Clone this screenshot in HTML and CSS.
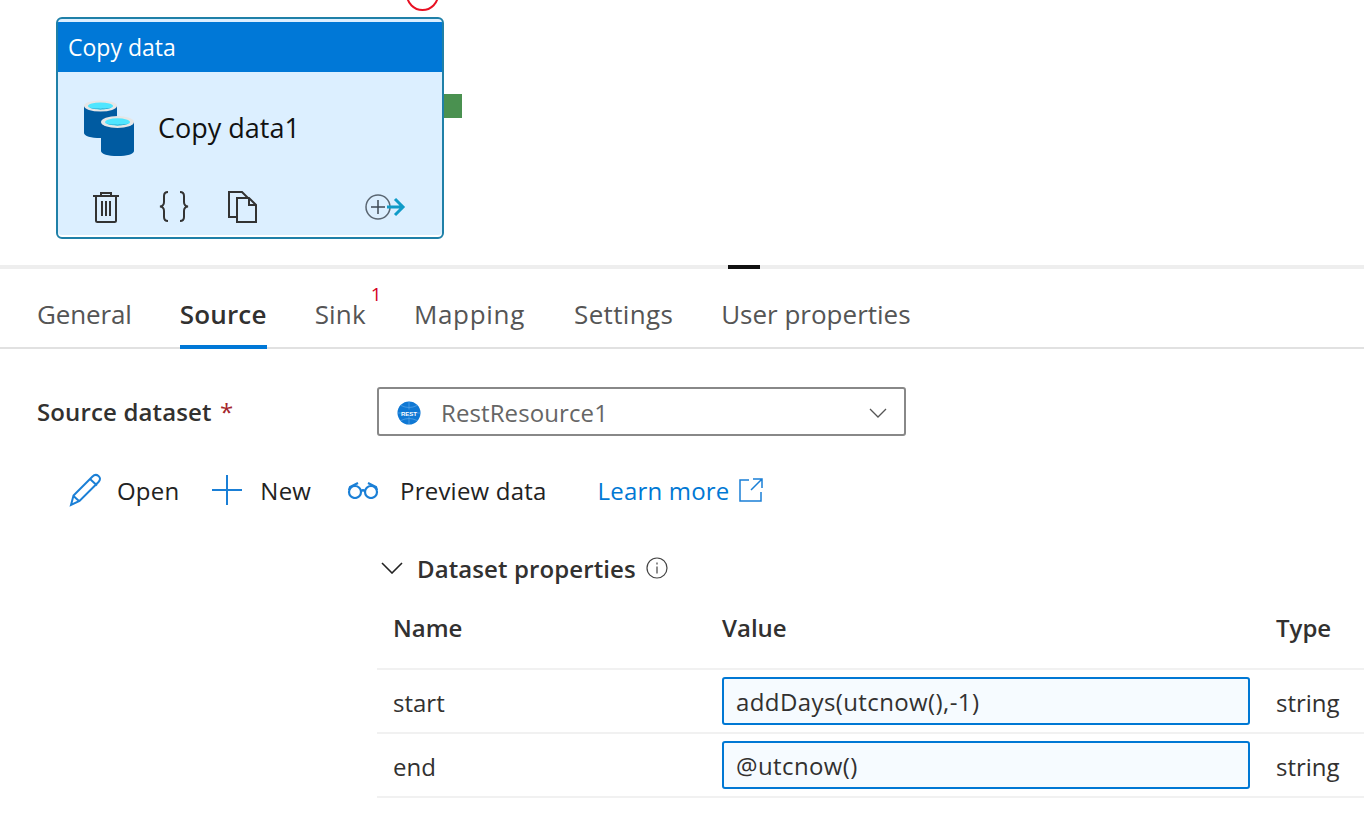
FILE: index.html
```html
<!DOCTYPE html>
<html lang="en">
<head>
<meta charset="utf-8">
<title>Copy data</title>
<link rel="stylesheet" href="styles.css">
</head>
<body>
<section class="canvas">
  <div class="error-ring"></div>
  <div class="port"></div>
  <div class="node">
    <div class="node-head">Copy data</div>
    <div class="node-body">
      <svg class="db" width="50" height="56" viewBox="0 0 50 56">
        <path d="M0 6v27c0 3 7 5 16.500 5S33 36 33 33V6z" fill="#005ba1"/>
        <ellipse cx="16.500" cy="6" rx="16.500" ry="5.500" fill="#e6e6e6"/>
        <ellipse cx="16.500" cy="6" rx="12.500" ry="3.500" fill="#50e6ff"/>
        <path d="M6 7.500c3 1.500 18 1.500 21 0-3 2.500-18 2.500-21 0z" fill="#2aa0c8"/>
        <path d="M17 22v29c0 3 7 5 16.500 5S50 54 50 51V22z" fill="#005ba1"/>
        <ellipse cx="33.500" cy="22" rx="16.500" ry="6" fill="#e6e6e6"/>
        <ellipse cx="33.500" cy="22" rx="12.500" ry="3.700" fill="#50e6ff"/>
        <path d="M23 23.500c3 1.500 18 1.500 21 0-3 2.500-18 2.500-21 0z" fill="#2aa0c8"/>
      </svg>
      <span class="node-name">Copy data1</span>
    </div>
    <div class="node-actions">
      <svg class="ico-trash" width="28" height="32" viewBox="0 0 28 32" fill="none" stroke="#333" stroke-width="2">
        <path d="M1 5h26M9 5V2h10v3M4 5v24.500q0 1.500 1.500 1.500h17q1.500 0 1.500-1.500V5M10 10v15M14 10v15M18 10v15"/>
      </svg>
      <svg class="ico-braces" width="30" height="32" viewBox="0 0 30 32" fill="none" stroke="#333" stroke-width="2">
        <path d="M9 1q-4 0-4 4v6q0 4-4 4.500 4 .5 4 4.500v6q0 4 4 4M21 1q4 0 4 4v6q0 4 4 4.500-4 .5-4 4.500v6q0 4-4 4"/>
      </svg>
      <svg class="ico-copy" width="30" height="32" viewBox="0 0 30 32" fill="none" stroke="#333" stroke-width="2">
        <path d="M9 26H1V1h13l6 6M9 7h12l7 7v17H9zM21 7v7h7"/>
      </svg>
      <svg class="ico-add" width="42" height="28" viewBox="0 0 42 28" fill="none">
        <circle cx="13" cy="14" r="12" stroke="#5a6672" stroke-width="1.500"/>
        <path d="M6 14h14M13 7v14" stroke="#3f4a55" stroke-width="1.500"/>
        <path d="M22 14h16M30 6l8 8-8 8" stroke="#0f9bc8" stroke-width="3"/>
      </svg>
    </div>
  </div>
</section>
<div class="splitter"><span class="grip"></span></div>
<nav class="tabs">
  <span class="tab t-general">General</span>
  <span class="tab active">Source</span>
  <span class="tab">Sink<sup class="badge">1</sup></span>
  <span class="tab t-mapping">Mapping</span>
  <span class="tab t-settings">Settings</span>
  <span class="tab t-user">User properties</span>
</nav>
<main class="panel">
  <div class="dataset-row">
    <label class="field-label">Source dataset <span class="req">*</span></label>
    <div class="select">
      <svg width="24" height="24" viewBox="0 0 24 24">
        <circle cx="12" cy="12" r="11.500" fill="#0f78d4"/>
        <path d="M.5 12h23M12 .5v23M4 4.500q8 4 16 0M4 19.500q8-4 16 0" stroke="#5ba8e8" stroke-width=".7" fill="none"/>
        <rect x="4.500" y="8.500" width="15" height="7" fill="#0f78d4"/>
        <text x="12" y="14.500" class="rest-text">REST</text>
      </svg>
      <span class="select-value">RestResource1</span>
      <svg class="chev" width="18" height="10" viewBox="0 0 18 10" fill="none" stroke="#555" stroke-width="1.300"><path d="M1 1l8 8 8-8"/></svg>
    </div>
  </div>
  <div class="toolbar">
    <span class="action a-open">
      <svg width="34" height="34" viewBox="0 0 34 34" fill="none" stroke="#1a7fd6" stroke-width="2">
        <path d="M2 32l2.500-9.500L23.500 3.500q3-3 6-.5t0 6L10.500 28zM4.500 23l6 5.500M21 6l7 6.500"/>
      </svg>
      <span>Open</span>
    </span>
    <span class="action a-new">
      <svg width="30" height="30" viewBox="0 0 30 30" fill="none" stroke="#1a7fd6" stroke-width="2"><path d="M0 15h30M15 0v30"/></svg>
      <span>New</span>
    </span>
    <span class="action a-prev">
      <svg width="32" height="18" viewBox="0 0 32 18" fill="none" stroke="#1a7fd6" stroke-width="2.200">
        <circle cx="8" cy="11" r="6"/><circle cx="24" cy="11" r="6"/><path d="M14 10q2-1.500 4 0M2 9l1-3 8-4M30 9l-1-3-8-4"/>
      </svg>
      <span>Preview data</span>
    </span>
    <a class="learn">Learn more
      <svg width="24" height="24" viewBox="0 0 24 24" fill="none" stroke="#1a7fd6" stroke-width="1.500"><path d="M10 2H1v21h21v-9M14 1h9v9M23 1L12 12"/></svg>
    </a>
  </div>
  <section class="props">
    <div class="props-head">
      <svg width="22" height="12" viewBox="0 0 22 12" fill="none" stroke="#222" stroke-width="1.600"><path d="M1 1l10 10L21 1"/></svg>
      <span class="props-title">Dataset properties</span>
      <svg width="22" height="22" viewBox="0 0 22 22" fill="none" stroke="#444" stroke-width="1.200"><circle cx="11" cy="11" r="10"/><path d="M11 9.500v7M11 5.500v2"/></svg>
    </div>
    <div class="grid-row grid-head"><span>Name</span><span>Value</span><span>Type</span></div>
    <div class="grid-row"><span>start</span><div class="input">addDays(utcnow(),-1)</div><span>string</span></div>
    <div class="grid-row"><span>end</span><div class="input">@utcnow()</div><span>string</span></div>
  </section>
</main>
</body>
</html>
```
FILE: styles.css
```css
* { box-sizing: border-box; }
html, body { margin: 0; height: 820px; overflow: hidden; background: #fff; }
body { font-family: "Open Sans", "Noto Sans", sans-serif; font-size: 24px; color: #323130; }

.canvas { position: relative; height: 265px; }
.error-ring { position: absolute; left: 406px; top: -22px; width: 33px; height: 33px; border: 2px solid #e81123; border-radius: 50%; }
.port { position: absolute; left: 443px; top: 94px; width: 19px; height: 24px; background: #4a9150; }
.node { position: absolute; left: 56px; top: 17px; width: 388px; height: 222px; border: 2px solid #1f80a8; border-radius: 6px; background: #dcefff; overflow: hidden; display: flex; flex-direction: column; box-shadow: inset 0 -2px 0 #fff; }
.node-head { height: 50px; margin-top: 3px; background: #0078d7; color: #fff; font-size: 23px; line-height: 50px; padding-left: 10px; }
.node-body { display: flex; align-items: center; height: 116px; padding: 0 0 6px 26px; }
.db { margin: 2px 24px 0 0; }
.node-name { font-size: 27px; color: #111; }
.node-actions { display: flex; align-items: center; margin-top: 3px; padding-left: 34px; }
.ico-braces { margin-left: 39px; }
.ico-copy { margin-left: 39px; }
.ico-add { margin-left: 107px; }

.splitter { position: relative; height: 4px; background: #eee; }
.grip { position: absolute; left: 728px; top: 0; width: 32px; height: 4px; background: #111; }

.tabs { display: flex; gap: 48px; height: 80px; padding: 25px 0 0 37px; border-bottom: 2px solid #e1e1e1; font-size: 26px; color: #555; letter-spacing: .2px; }
.tab { position: relative; height: 55px; line-height: 40px; }
.tab.active { font-weight: 600; color: #323130; border-bottom: 4px solid #0078d7; }
.t-general { letter-spacing: -.15px; }
.t-mapping { letter-spacing: .7px; }
.t-settings { letter-spacing: .33px; margin-left: 1px; }
.t-user { letter-spacing: 0; }
.badge { position: absolute; left: 56px; top: -10px; font-size: 19px; line-height: 20px; color: #d6001c; }

.panel { padding-left: 37px; }
.dataset-row { display: flex; align-items: center; padding-top: 38px; }
.field-label { width: 340px; font-weight: 600; font-size: 24px; letter-spacing: .14px; }
.req { color: #a4262c; font-weight: 400; margin-left: 2px; }
.select { display: flex; align-items: center; width: 529px; height: 49px; border: 2px solid #888; border-radius: 3px; padding: 2px 17px 0 18px; color: #666; }
.select-value { margin-left: 20px; flex: 1; letter-spacing: .1px; }
.rest-text { font-family: "Liberation Sans", sans-serif; font-size: 6px; font-weight: 700; fill: #fff; text-anchor: middle; }

.toolbar { display: flex; align-items: center; margin: 30px 0 0 32px; height: 48px; color: #222; letter-spacing: .2px; }
.action { display: flex; align-items: center; gap: 19px; }
.a-open { gap: 14px; }
.a-new { margin-left: 33px; gap: 18px; }
.a-prev { margin-left: 36px; gap: 21px; }
.learn { display: flex; align-items: center; gap: 9px; margin-left: 51px; color: #0078d4; }

.props { margin-left: 340px; }
.props-head { display: flex; align-items: center; height: 40px; margin: 34px 0 0 6px; }
.props-head > svg:first-child { margin-left: -2px; }
.props-title { font-weight: 600; margin: 0 10px 0 14px; letter-spacing: .1px; }
.grid-row { display: grid; grid-template-columns: 329px 554px auto; align-items: center; height: 64px; padding-left: 16px; border-bottom: 2px solid #f1f1f1; }
.grid-row > span { padding-top: 2px; }
.grid-head { height: 82px; padding-bottom: 4px; font-weight: 600; }
.input { width: 528px; height: 48px; border: 2px solid #0078d4; border-radius: 3px; background: #f6fbff; line-height: 45px; padding-left: 12px; letter-spacing: .4px; }
```
